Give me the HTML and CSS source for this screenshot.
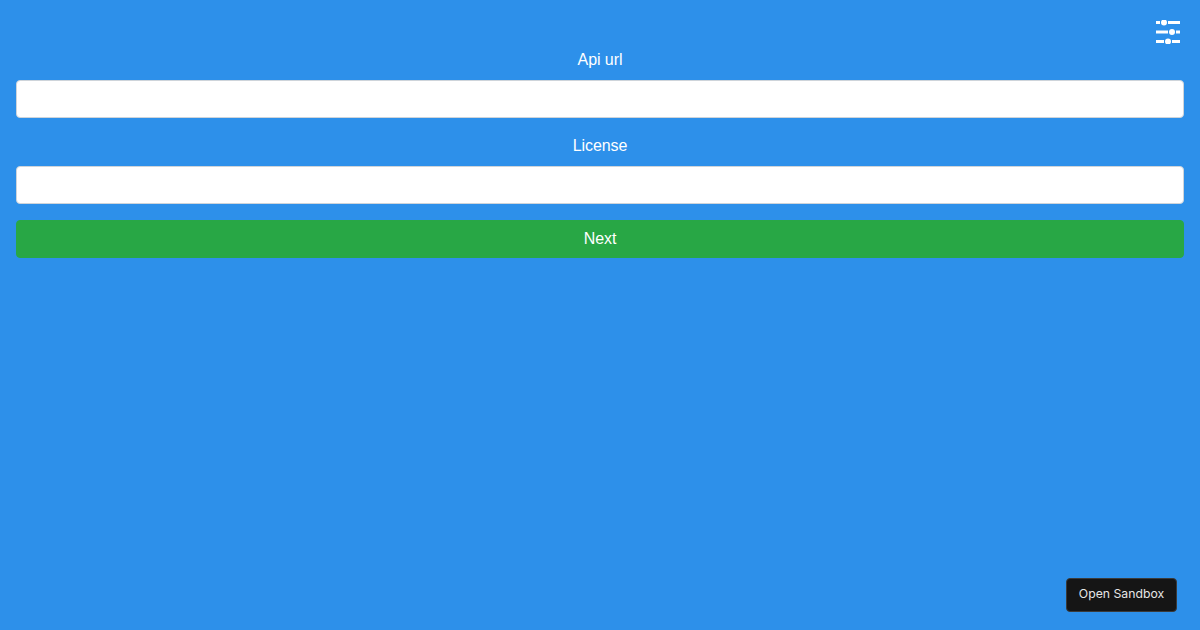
FILE: index.html
```
<!DOCTYPE html>
<html lang="en">
<head>
<meta charset="utf-8">
<title>Setup</title>
<link rel="stylesheet" href="styles.css">
</head>
<body>
<main class="page">
  <header class="toolbar">
    <svg class="settings-icon" width="24" height="24" viewBox="0 0 24 24" aria-hidden="true">
      <g class="bars">
        <rect x="0" y="1" width="4" height="3"/>
        <rect x="12" y="1" width="12" height="3"/>
        <rect x="0" y="10.500" width="12" height="3"/>
        <rect x="20" y="10.500" width="4" height="3"/>
        <rect x="0" y="20" width="8" height="3"/>
        <rect x="16" y="20" width="8" height="3"/>
      </g>
      <circle cx="8" cy="2.500" r="3"/>
      <circle cx="16" cy="12" r="3"/>
      <circle cx="12" cy="21.500" r="3"/>
    </svg>
  </header>
  <form class="form">
    <div class="field">
      <label class="field-label" for="api">Api url</label>
      <input class="field-input" id="api" type="text">
    </div>
    <div class="field">
      <label class="field-label" for="license">License</label>
      <input class="field-input" id="license" type="text">
    </div>
    <button class="next-button" type="button">Next</button>
  </form>
</main>
<a class="sandbox-button">Open Sandbox</a>
</body>
</html>
```
FILE: styles.css
```
* {
  box-sizing: border-box;
}

html,
body {
  height: 100%;
}

body {
  margin: 0;
  background: #2d90ea;
  color: #fff;
  font-family: "Liberation Sans", Arial, sans-serif;
  font-size: 16px;
  line-height: 1.5;
  letter-spacing: -0.08px;
  overflow: hidden;
}

.page {
  padding: 16px;
}

.toolbar {
  display: flex;
  justify-content: flex-end;
  align-items: center;
  height: 32px;
  padding-right: 4px;
}

.settings-icon {
  display: block;
  fill: #fff;
}

.form {
  display: flex;
  flex-direction: column;
}

.field {
  display: flex;
  flex-direction: column;
  margin-bottom: 16px;
}

.field-label {
  margin-bottom: 8px;
  text-align: center;
}

.field-input {
  height: 38px;
  padding: 6px 12px;
  border: 1px solid #ced4da;
  border-radius: 4px;
  background: #fff;
  font: inherit;
}

.next-button {
  height: 38px;
  padding: 6px 12px;
  border: 1px solid #28a745;
  border-radius: 4px;
  background: #28a745;
  color: #fff;
  font: inherit;
  letter-spacing: inherit;
}

.sandbox-button {
  position: fixed;
  right: 23px;
  bottom: 18px;
  display: flex;
  align-items: center;
  justify-content: center;
  width: 111px;
  height: 34px;
  padding-bottom: 1px;
  border: 1px solid #3a3a3a;
  border-radius: 4px;
  background: #151515;
  color: #e6e6e6;
  font-family: Inter, sans-serif;
  font-size: 12.250px;
  letter-spacing: 0;
  line-height: 1;
}
```
